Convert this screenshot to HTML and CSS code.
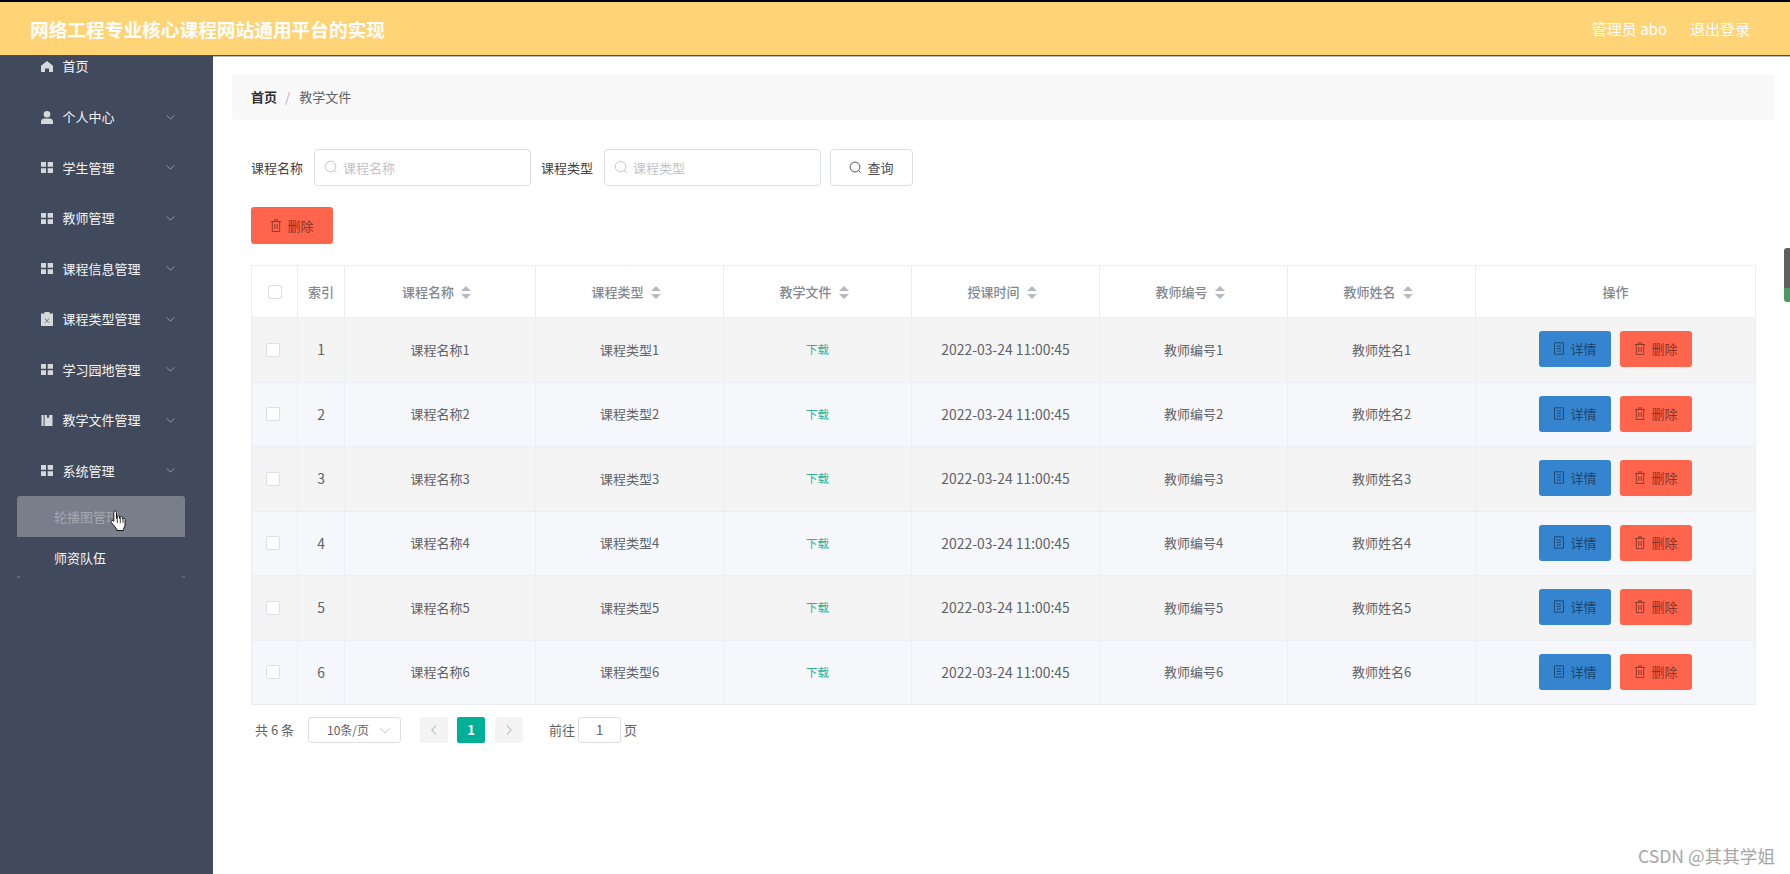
FILE: index.html
```html
<!DOCTYPE html>
<html lang="zh-CN">
<head>
<meta charset="utf-8">
<title>网络工程专业核心课程网站通用平台的实现</title>
<link rel="stylesheet" href="styles.css">
</head>
<body>
<svg class="defs" width="0" height="0" aria-hidden="true">
  <symbol id="i-home" viewBox="0 0 12 11"><path d="M6 0 0 4.800V11h4V7.500h4V11h4V4.800z"/></symbol>
  <symbol id="i-user" viewBox="0 0 12 13"><circle cx="6" cy="3.300" r="3.300"/><path d="M0 13v-2.500C0 8.500 1.800 7.500 3.500 7.500h5c1.700 0 3.500 1 3.500 3V13z"/></symbol>
  <symbol id="i-grid" viewBox="0 0 12 11"><path d="M0 0h5v4.700H0zM6.700 0H12v4.700H6.700zM0 6.300h5V11H0zM6.700 6.300H12V11H6.700z"/></symbol>
  <symbol id="i-clip" viewBox="0 0 12 14"><path d="M3.500 0h5v1.500H12V14H0V1.500h3.500z"/><path d="M3.800 6.500l4.400 4.400M8.200 6.500l-4.400 4.400" stroke="#6d7483" fill="none"/></symbol>
  <symbol id="i-book" viewBox="0 0 12 12"><path d="M0 0h2.300v12H0zM3.300 0H6v3.500l1.200-1 1.200 1V0H12v12H3.300z"/></symbol>
  <symbol id="i-search" viewBox="0 0 14 14"><circle cx="6.500" cy="6.500" r="5.300" fill="none" stroke="currentColor" stroke-width="1"/><path d="m10.300 10.300 2.200 2.200" stroke="currentColor" fill="none"/></symbol>
  <symbol id="i-trash" viewBox="0 0 12 13"><path d="M1 2.500h10M4.500 2.500V.8h3v1.700M2.300 2.500v10h7.400v-10M4.800 5v5M7.200 5v5" fill="none" stroke="currentColor" stroke-width=".9"/></symbol>
  <symbol id="i-doc" viewBox="0 0 12 13"><path d="M1.500.8h9v11.400h-9zM3.800 4h4.400M3.800 6.500h4.400M3.800 9h4.400" fill="none" stroke="currentColor" stroke-width=".9"/></symbol>
  <symbol id="i-down" viewBox="0 0 10 6"><path d="m.5.500 4.500 4.500 4.500-4.500" fill="none" stroke="currentColor"/></symbol>
  <symbol id="i-left" viewBox="0 0 6 10"><path d="M5 .5.800 5 5 9.500" fill="none" stroke="currentColor" stroke-width="1.200"/></symbol>
  <symbol id="i-right" viewBox="0 0 6 10"><path d="M1 .5 5.200 5 1 9.500" fill="none" stroke="currentColor" stroke-width="1.200"/></symbol>
</svg>
<div class="app">
  <header class="topbar">
    <div class="title">网络工程专业核心课程网站通用平台的实现</div>
    <div class="top-right"><span>管理员 abo</span><span>退出登录</span></div>
  </header>
  <div class="layout">
    <aside class="side">
      <div class="item first"><svg class="ico home"><use href="#i-home"/></svg><span>首页</span></div>
      <div class="item"><svg class="ico user"><use href="#i-user"/></svg><span>个人中心</span><svg class="arrow"><use href="#i-down"/></svg></div>
      <div class="item"><svg class="ico"><use href="#i-grid"/></svg><span>学生管理</span><svg class="arrow"><use href="#i-down"/></svg></div>
      <div class="item"><svg class="ico"><use href="#i-grid"/></svg><span>教师管理</span><svg class="arrow"><use href="#i-down"/></svg></div>
      <div class="item"><svg class="ico"><use href="#i-grid"/></svg><span>课程信息管理</span><svg class="arrow"><use href="#i-down"/></svg></div>
      <div class="item"><svg class="ico tall"><use href="#i-clip"/></svg><span>课程类型管理</span><svg class="arrow"><use href="#i-down"/></svg></div>
      <div class="item"><svg class="ico"><use href="#i-grid"/></svg><span>学习园地管理</span><svg class="arrow"><use href="#i-down"/></svg></div>
      <div class="item"><svg class="ico"><use href="#i-book"/></svg><span>教学文件管理</span><svg class="arrow"><use href="#i-down"/></svg></div>
      <div class="item"><svg class="ico"><use href="#i-grid"/></svg><span>系统管理</span><svg class="arrow"><use href="#i-down"/></svg></div>
      <div class="submenu">
        <div class="sub active">轮播图管理
          <svg class="hand" viewBox="0 0 16 22"><path d="M5 1.500c1 0 1.500.7 1.500 1.700V9l.8-.2V7.300c0-1.500 2.200-1.500 2.300 0V9l.7.100V8c0-1.400 2.200-1.400 2.300 0v1.600l.5.100c0-1.200 2-1.100 2 .3v4.500c0 2.500-1.200 3.500-1.700 5.500v1H6.800v-1C5.500 17.500 3.500 15.800 1.300 13c-1-1.300.6-2.800 1.900-1.700l.6.600V3.200c0-1 .5-1.700 1.200-1.700z" fill="#fff" stroke="#111" stroke-width="1"/><path d="M7.300 9.500v4M10.300 9.500v4M13 10v3.500" stroke="#111" stroke-width=".8" fill="none"/></svg>
        </div>
        <div class="sub">师资队伍</div>
      </div>
    </aside>
    <main class="main">
      <nav class="crumb"><b>首页</b><i>/</i><span>教学文件</span></nav>
      <form class="filters">
        <label>课程名称</label>
        <div class="input"><svg class="s-ico"><use href="#i-search"/></svg><span>课程名称</span></div>
        <label>课程类型</label>
        <div class="input"><svg class="s-ico"><use href="#i-search"/></svg><span>课程类型</span></div>
        <div class="btn-plain"><svg class="b-ico"><use href="#i-search"/></svg>查询</div>
      </form>
      <div class="btn red top-del"><svg class="b-ico"><use href="#i-trash"/></svg>删除</div>
      <table class="grid">
        <colgroup>
          <col class="c1"><col class="c2"><col class="c3"><col class="c4"><col class="c4"><col class="c4"><col class="c4"><col class="c4"><col>
        </colgroup>
        <thead>
          <tr>
            <th><div class="check head"></div></th>
            <th>索引</th>
            <th>课程名称<em class="sort"></em></th>
            <th>课程类型<em class="sort"></em></th>
            <th>教学文件<em class="sort"></em></th>
            <th>授课时间<em class="sort"></em></th>
            <th>教师编号<em class="sort"></em></th>
            <th>教师姓名<em class="sort"></em></th>
            <th>操作</th>
          </tr>
        </thead>
        <tbody>
          <tr><td><div class="check"></div></td><td class="num">1</td><td>课程名称1</td><td>课程类型1</td><td class="dl">下载</td><td class="num">2022-03-24 11:00:45</td><td>教师编号1</td><td>教师姓名1</td><td><div class="ops"><div class="btn blue"><svg class="b-ico"><use href="#i-doc"/></svg>详情</div><div class="btn red"><svg class="b-ico"><use href="#i-trash"/></svg>删除</div></div></td></tr>
          <tr><td><div class="check"></div></td><td class="num">2</td><td>课程名称2</td><td>课程类型2</td><td class="dl">下载</td><td class="num">2022-03-24 11:00:45</td><td>教师编号2</td><td>教师姓名2</td><td><div class="ops"><div class="btn blue"><svg class="b-ico"><use href="#i-doc"/></svg>详情</div><div class="btn red"><svg class="b-ico"><use href="#i-trash"/></svg>删除</div></div></td></tr>
          <tr><td><div class="check"></div></td><td class="num">3</td><td>课程名称3</td><td>课程类型3</td><td class="dl">下载</td><td class="num">2022-03-24 11:00:45</td><td>教师编号3</td><td>教师姓名3</td><td><div class="ops"><div class="btn blue"><svg class="b-ico"><use href="#i-doc"/></svg>详情</div><div class="btn red"><svg class="b-ico"><use href="#i-trash"/></svg>删除</div></div></td></tr>
          <tr><td><div class="check"></div></td><td class="num">4</td><td>课程名称4</td><td>课程类型4</td><td class="dl">下载</td><td class="num">2022-03-24 11:00:45</td><td>教师编号4</td><td>教师姓名4</td><td><div class="ops"><div class="btn blue"><svg class="b-ico"><use href="#i-doc"/></svg>详情</div><div class="btn red"><svg class="b-ico"><use href="#i-trash"/></svg>删除</div></div></td></tr>
          <tr><td><div class="check"></div></td><td class="num">5</td><td>课程名称5</td><td>课程类型5</td><td class="dl">下载</td><td class="num">2022-03-24 11:00:45</td><td>教师编号5</td><td>教师姓名5</td><td><div class="ops"><div class="btn blue"><svg class="b-ico"><use href="#i-doc"/></svg>详情</div><div class="btn red"><svg class="b-ico"><use href="#i-trash"/></svg>删除</div></div></td></tr>
          <tr><td><div class="check"></div></td><td class="num">6</td><td>课程名称6</td><td>课程类型6</td><td class="dl">下载</td><td class="num">2022-03-24 11:00:45</td><td>教师编号6</td><td>教师姓名6</td><td><div class="ops"><div class="btn blue"><svg class="b-ico"><use href="#i-doc"/></svg>详情</div><div class="btn red"><svg class="b-ico"><use href="#i-trash"/></svg>删除</div></div></td></tr>
        </tbody>
      </table>
      <div class="pager">
        <span class="total">共 6 条</span>
        <div class="size"><span>10条/页</span><svg class="size-arrow"><use href="#i-down"/></svg></div>
        <div class="pg prev"><svg class="chev"><use href="#i-left"/></svg></div>
        <div class="pg on">1</div>
        <div class="pg next"><svg class="chev"><use href="#i-right"/></svg></div>
        <span class="goto">前往</span>
        <div class="jump">1</div>
        <span>页</span>
      </div>
    </main>
  </div>
</div>
<div class="edge"></div>
<div class="mark">CSDN @其其学姐</div>
</body>
</html>
```
FILE: styles.css
```css
* { box-sizing: border-box; }
html, body { margin: 0; height: 100%; overflow: hidden; background: #fff; }
body { font-family: "Noto Sans CJK SC", "Noto Sans", sans-serif; font-size: 13px; color: #606266; }
.defs { position: absolute; }
.app { display: flex; flex-direction: column; height: 874px; }

.topbar { height: 56px; flex: none; display: flex; justify-content: space-between; align-items: center; background: #ffd476; border-top: 2px solid #000; border-bottom: 1px solid #5c4f2a; padding: 0 40px 0 30px; color: #fff; box-shadow: 0 1px 0 #bbb; }
.title { font-size: 18.700px; font-weight: 700; line-height: 24px; }
.top-right { display: flex; gap: 23px; font-size: 15px; }

.layout { flex: 1; display: flex; min-height: 0; }
.side { width: 213px; flex: none; background: #414a5c; color: #fff; }
.item { height: 50.500px; display: flex; align-items: center; padding-left: 41px; position: relative; color: #f4f5f7; line-height: 20px; }
.item.first { height: 35.750px; align-items: flex-start; }
.ico { width: 12px; height: 11px; margin-right: 10px; fill: #d6d8dc; flex: none; }
.ico.home { margin-top: 5px; }
.ico.user { height: 13px; }
.ico.tall { height: 14px; }
.item span { margin-left: -.5px; }
.arrow { position: absolute; left: 166px; top: 23px; width: 9px; height: 5px; color: #a9adb6; }
.submenu { margin: 0 28px 0 17px; height: 82px; position: relative; }
.submenu::before, .submenu::after { content: ""; position: absolute; bottom: 0; width: 3px; height: 2px; background: #5e6676; }
.submenu::before { left: 0; }
.submenu::after { right: 0; }
.sub { height: 41px; padding-left: 37px; line-height: 41px; position: relative; font-size: 13px; color: #f4f5f7; }
.sub.active { background: #787e8a; border-radius: 3px 3px 0 0; color: #a4a8b0; }
.hand { position: absolute; left: 93px; top: 13px; width: 16px; height: 23px; }

.main { flex: 1; min-width: 0; padding: 18px 15px 0 19px; }
.crumb { height: 46px; background: #f9f9f9; border-radius: 4px; display: flex; align-items: center; padding: 0 0 1px 19px; color: #606266; }
.crumb b { color: #303133; font-weight: 700; }
.crumb i { font-style: normal; color: #aeb2ba; margin: 0 9px 0 8px; }

.filters { display: flex; align-items: center; margin: 29px 0 0 19px; height: 37px; color: #404246; }
.filters label { width: 63px; flex: none; padding-bottom: 1px; }
.filters label + .input + label { width: 63px; margin-left: 10px; }
.input { width: 217px; height: 37px; border: 1px solid #dcdfe6; border-radius: 4px; display: flex; align-items: center; padding: 0 0 1px 9px; color: #c0c4cc; background: #fff; }
.s-ico { width: 14px; height: 14px; margin-right: 5px; color: #c0c4cc; }
.btn-plain { width: 83px; height: 37px; margin-left: 9px; border: 1px solid #dcdfe6; border-radius: 4px; display: flex; align-items: center; justify-content: center; color: #4c4e52; padding-bottom: 1px; }
.btn-plain .b-ico { width: 13px; height: 13px; }
.b-ico { width: 12px; height: 13px; margin-right: 5px; flex: none; }

.btn { display: flex; align-items: center; justify-content: center; width: 72px; height: 36px; border-radius: 3px; font-size: 13px; padding-bottom: 1px; }
.red { background: #ff654c; color: #85362b; }
.blue { background: #3584d0; color: #1d4469; }
.top-del { width: 82px; height: 37px; margin: 21px 0 21px 19px; }

.grid { width: 1505px; margin-left: 19px; border-collapse: collapse; table-layout: fixed; border: 1px solid #ebeef5; }
.c1 { width: 46px; }
.c2 { width: 47px; }
.c3 { width: 191px; }
.c4 { width: 188px; }
.grid th, .grid td { border: 1px solid #ebeef5; text-align: center; padding: 0 0 1px; font-weight: 400; }
.grid th { height: 52px; color: #85888e; font-weight: 500; background: #fff; }
.grid td { height: 64.500px; color: #606266; font-size: 13px; }
.grid td.num { font-size: 13.900px; }
.grid tbody tr:nth-child(odd) td { background: #f4f4f5; }
.grid tbody tr:nth-child(even) td { background: #f5f7fa; }
.grid td.dl { color: #2bb096; font-size: 11.500px; }
.check { width: 14px; height: 14px; background: #fff; border: 1px solid #dcdfe6; border-radius: 2px; margin: 1px 0 0 14px; }
.check.head { margin: 1px auto 0; }
.sort { display: inline-block; vertical-align: middle; position: relative; width: 24px; height: 13px; margin-top: -1px; }
.sort::before, .sort::after { content: ""; position: absolute; left: 7px; border-left: 5px solid transparent; border-right: 5px solid transparent; }
.sort::before { top: 0; border-bottom: 5px solid #b6b9c0; }
.sort::after { bottom: 0; border-top: 5px solid #b6b9c0; }
.ops { display: flex; justify-content: center; gap: 9px; }

.pager { display: flex; align-items: center; margin: 10px 0 0 23px; height: 29px; color: #606266; }
.total { width: 53px; flex: none; }
.size { width: 93px; height: 26px; border: 1px solid #dcdfe6; border-radius: 3px; display: flex; align-items: center; padding-left: 18px; position: relative; font-size: 12px; }
.size-arrow { position: absolute; right: 10px; top: 10px; width: 10px; height: 6px; color: #c0c4cc; }
.pg { width: 28px; height: 26px; border-radius: 2px; background: #f4f4f5; display: flex; align-items: center; justify-content: center; color: #c0c4cc; }
.chev { width: 6px; height: 10px; }
.prev { margin-left: 19px; }
.on { margin: 0 10px 0 9px; background: #00b096; color: #fff; font-weight: 700; }
.goto { margin: 0 3px 0 26px; }
.jump { width: 43px; height: 26px; margin-right: 3px; border: 1px solid #dcdfe6; border-radius: 3px; display: flex; align-items: center; justify-content: center; }

.edge { position: absolute; right: 0; top: 248px; width: 6px; height: 54px; background: linear-gradient(#5f5f5f 0 75%, #4f9a63 75%); border-radius: 3px 0 0 3px; }
.mark { position: absolute; right: 15px; bottom: 7px; font-size: 17.600px; line-height: 22px; color: #a6a6a6; }
```
